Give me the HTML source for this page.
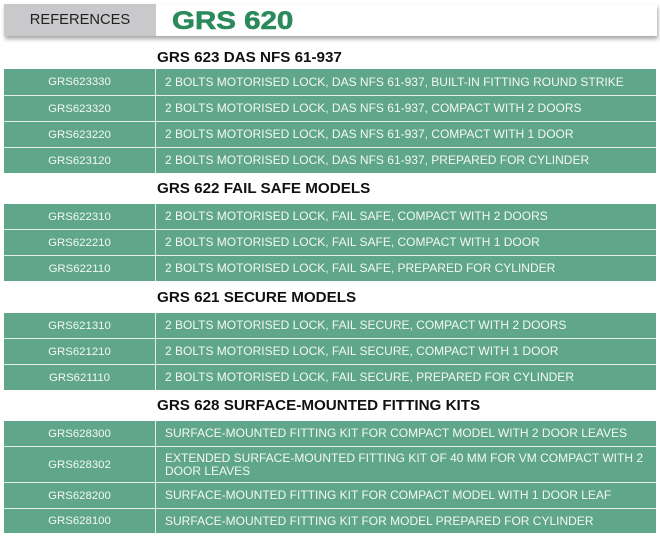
<!DOCTYPE html>
<html><head><meta charset="utf-8"><style>
*{margin:0;padding:0;box-sizing:border-box}
body{width:660px;height:539px;background:#fff;font-family:"Liberation Sans",Arial,sans-serif;position:relative;overflow:hidden}
.hdr{position:absolute;left:4px;top:4px;width:653px;height:32px;background:#fff;box-shadow:1px 3px 4px rgba(0,0,0,.35)}
.ref{position:absolute;left:0;top:0;width:152px;height:32px;background:#c9c9cb;color:#222;font-size:14.7px;line-height:32px;text-align:center}
.logo{position:absolute;left:168px;top:2px;font-size:25px;font-weight:bold;color:#2b8a5c;letter-spacing:0px;line-height:30px;transform:scaleX(1.18);transform-origin:left;-webkit-text-stroke:0.6px #2b8a5c}
.t{position:absolute;left:157px;font-size:15.2px;font-weight:bold;color:#111;line-height:18px}
.blk{position:absolute;left:4px;width:652px;background:#5fa68a}
.r{position:absolute;left:0;width:652px;border-top:1.5px solid #e4efe9;color:#f4f8f6;font-size:12px}
.r:first-child{border-top:none}
.c1{position:absolute;left:0;top:0;bottom:0;width:152px;border-right:1.5px solid #e4efe9;display:flex;align-items:center;justify-content:center;font-size:11.4px}
.c2{position:absolute;left:161px;right:6px;top:0;bottom:0;display:flex;align-items:center;line-height:13px}
</style></head><body>
<div class="hdr"><div class="ref">REFERENCES</div><div class="logo">GRS 620</div></div>

<div class="t" style="top:49px">GRS 623 DAS NFS 61-937</div>
<div class="blk" style="top:69px;height:104px">
<div class="r" style="top:0;height:26px"><div class="c1">GRS623330</div><div class="c2">2 BOLTS MOTORISED LOCK, DAS NFS 61-937, BUILT-IN FITTING ROUND STRIKE</div></div>
<div class="r" style="top:26px;height:26px"><div class="c1">GRS623320</div><div class="c2">2 BOLTS MOTORISED LOCK, DAS NFS 61-937, COMPACT WITH 2 DOORS</div></div>
<div class="r" style="top:52px;height:26px"><div class="c1">GRS623220</div><div class="c2">2 BOLTS MOTORISED LOCK, DAS NFS 61-937, COMPACT WITH 1 DOOR</div></div>
<div class="r" style="top:78px;height:26px"><div class="c1">GRS623120</div><div class="c2">2 BOLTS MOTORISED LOCK, DAS NFS 61-937, PREPARED FOR CYLINDER</div></div>
</div>

<div class="t" style="top:180px">GRS 622 FAIL SAFE MODELS</div>
<div class="blk" style="top:204px;height:77px">
<div class="r" style="top:0;height:25px"><div class="c1">GRS622310</div><div class="c2">2 BOLTS MOTORISED LOCK, FAIL SAFE, COMPACT WITH 2 DOORS</div></div>
<div class="r" style="top:25px;height:26px"><div class="c1">GRS622210</div><div class="c2">2 BOLTS MOTORISED LOCK, FAIL SAFE, COMPACT WITH 1 DOOR</div></div>
<div class="r" style="top:51px;height:26px"><div class="c1">GRS622110</div><div class="c2">2 BOLTS MOTORISED LOCK, FAIL SAFE, PREPARED FOR CYLINDER</div></div>
</div>

<div class="t" style="top:289px">GRS 621 SECURE MODELS</div>
<div class="blk" style="top:313px;height:77px">
<div class="r" style="top:0;height:25px"><div class="c1">GRS621310</div><div class="c2">2 BOLTS MOTORISED LOCK, FAIL SECURE, COMPACT WITH 2 DOORS</div></div>
<div class="r" style="top:25px;height:26px"><div class="c1">GRS621210</div><div class="c2">2 BOLTS MOTORISED LOCK, FAIL SECURE, COMPACT WITH 1 DOOR</div></div>
<div class="r" style="top:51px;height:26px"><div class="c1">GRS621110</div><div class="c2">2 BOLTS MOTORISED LOCK, FAIL SECURE, PREPARED FOR CYLINDER</div></div>
</div>

<div class="t" style="top:397px">GRS 628 SURFACE-MOUNTED FITTING KITS</div>
<div class="blk" style="top:421px;height:112px">
<div class="r" style="top:0;height:25px"><div class="c1">GRS628300</div><div class="c2">SURFACE-MOUNTED FITTING KIT FOR COMPACT MODEL WITH 2 DOOR LEAVES</div></div>
<div class="r" style="top:25px;height:36px"><div class="c1">GRS628302</div><div class="c2">EXTENDED SURFACE-MOUNTED FITTING KIT OF 40 MM FOR VM COMPACT WITH 2 DOOR LEAVES</div></div>
<div class="r" style="top:61px;height:26px"><div class="c1">GRS628200</div><div class="c2">SURFACE-MOUNTED FITTING KIT FOR COMPACT MODEL WITH 1 DOOR LEAF</div></div>
<div class="r" style="top:87px;height:25px"><div class="c1">GRS628100</div><div class="c2">SURFACE-MOUNTED FITTING KIT FOR MODEL PREPARED FOR CYLINDER</div></div>
</div>
</body></html>
